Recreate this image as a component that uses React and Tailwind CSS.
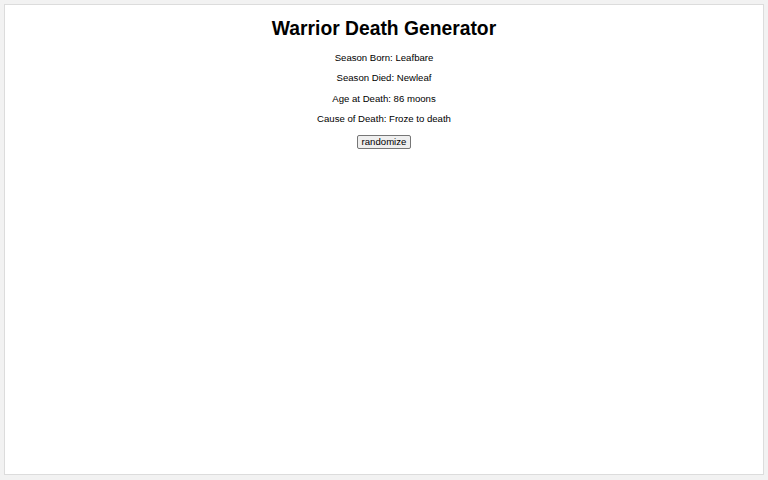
export default function App() {
  const facts = [
    ['Season Born', 'Leafbare'],
    ['Season Died', 'Newleaf'],
    ['Age at Death', '86 moons'],
    ['Cause of Death', 'Froze to death'],
  ];

  return (
    <div className="h-[480px] bg-[#f2f2f2] p-[4px] font-['Liberation_Sans',Arial,sans-serif] text-black">
      <div className="h-[471px] bg-white border border-[#dcdcdc] flex flex-col items-center pt-[14px]">
        <h1 className="text-[19.3px] font-bold leading-[20px]">Warrior Death Generator</h1>
        <div className="flex flex-col items-center mt-[13px] gap-[8.3px]">
          {facts.map(([label, value]) => (
            <p key={label} className="text-[9.6px] leading-[12px]">
              {label}: {value}
            </p>
          ))}
        </div>
        <button className="mt-[10px] px-[4px] text-[9.6px] leading-[12px] bg-[#efefef] border border-[#767676] rounded-[2px]">
          randomize
        </button>
      </div>
    </div>
  );
}
